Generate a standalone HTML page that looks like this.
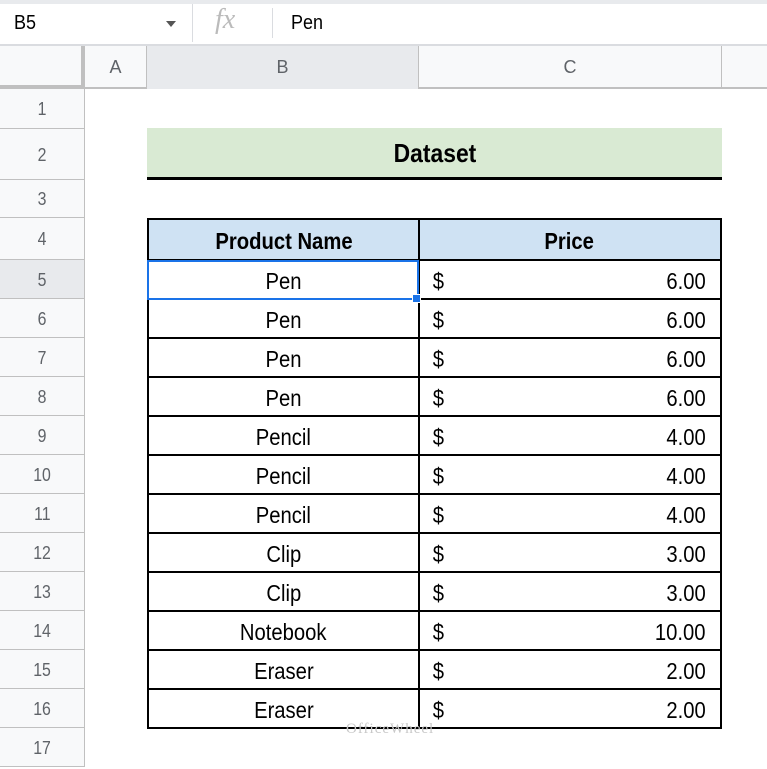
<!DOCTYPE html>
<html><head><style>
body{margin:0;width:767px;height:769px;overflow:hidden;background:#fff;font-family:"Liberation Sans",Arial,sans-serif;position:relative}
.a{position:absolute;box-sizing:border-box}
.rh{position:absolute;left:0;width:85px;background:#f8f9fa;border-bottom:1px solid #c0c0c0;border-right:1px solid #c0c0c0;color:#5f6368;font-size:18px;text-align:center;box-sizing:border-box;display:flex;align-items:center;justify-content:center;padding-top:2px}
.rh span,.cell span{display:inline-block;transform:scaleX(0.88)}
.cell{position:absolute;box-sizing:border-box;font-size:23px;color:#000;display:flex;align-items:center;padding-top:3px}
</style></head><body>
<div class="a" style="left:0;top:0;width:767px;height:4px;background:#e8eaed"></div>
<div class="a" style="left:0;top:44px;width:767px;height:2px;background:#dadce0"></div>
<div class="a" style="left:14px;top:12px;font-size:20px;color:#000;transform:scaleX(0.9);transform-origin:left">B5</div>
<div class="a" style="left:166px;top:21px;width:0;height:0;border-left:5px solid transparent;border-right:5px solid transparent;border-top:6px solid #555"></div>
<div class="a" style="left:192px;top:4px;width:1px;height:38px;background:#dadce0"></div>
<div class="a" style="left:215px;top:4px;font-family:'Liberation Serif',serif;font-style:italic;font-size:28px;color:#bbb">fx</div>
<div class="a" style="left:272px;top:8px;width:1px;height:30px;background:#dadce0"></div>
<div class="a" style="left:291px;top:12px;font-size:20px;color:#000;transform:scaleX(0.9);transform-origin:left">Pen</div>
<div class="a" style="left:0;top:46px;width:767px;height:43px;background:#f8f9fa;border-bottom:2px solid #c0c0c0"></div>
<div class="a" style="left:0;top:46px;width:85px;height:43px;border-right:4px solid #c0c0c0;border-bottom:4px solid #c0c0c0"></div>
<div class="a" style="left:85px;top:46px;width:62px;height:43px;border-right:1px solid #c0c0c0;color:#5f6368;font-size:18px;text-align:center;line-height:43px">A</div>
<div class="a" style="left:147px;top:46px;width:272px;height:43px;background:#e8eaed;border-right:1px solid #c0c0c0;color:#5f6368;font-size:18px;text-align:center;line-height:43px">B</div>
<div class="a" style="left:419px;top:46px;width:303px;height:43px;border-right:1px solid #c0c0c0;color:#5f6368;font-size:18px;text-align:center;line-height:43px">C</div>
<div class="rh" style="top:89px;height:40px"><span>1</span></div>
<div class="rh" style="top:129px;height:51px"><span>2</span></div>
<div class="rh" style="top:180px;height:38px"><span>3</span></div>
<div class="rh" style="top:218px;height:42px"><span>4</span></div>
<div class="rh" style="top:260px;height:39px;background:#e8eaed"><span>5</span></div>
<div class="rh" style="top:299px;height:39px"><span>6</span></div>
<div class="rh" style="top:338px;height:39px"><span>7</span></div>
<div class="rh" style="top:377px;height:39px"><span>8</span></div>
<div class="rh" style="top:416px;height:39px"><span>9</span></div>
<div class="rh" style="top:455px;height:39px"><span>10</span></div>
<div class="rh" style="top:494px;height:39px"><span>11</span></div>
<div class="rh" style="top:533px;height:39px"><span>12</span></div>
<div class="rh" style="top:572px;height:39px"><span>13</span></div>
<div class="rh" style="top:611px;height:39px"><span>14</span></div>
<div class="rh" style="top:650px;height:39px"><span>15</span></div>
<div class="rh" style="top:689px;height:39px"><span>16</span></div>
<div class="rh" style="top:728px;height:39px"><span>17</span></div>
<div class="cell" style="left:147px;top:128px;width:575px;height:52px;background:#d9ead3;border-bottom:3px solid #000;justify-content:center;font-weight:bold;font-size:26px;padding-top:2px"><span>Dataset</span></div>
<div class="a" style="left:147px;top:218px;width:575px;height:511px;border:2px solid #000"></div>
<div class="cell" style="left:149px;top:220px;width:270px;height:40px;background:#cfe2f3;justify-content:center;font-weight:bold"><span>Product Name</span></div>
<div class="cell" style="left:419px;top:220px;width:301px;height:40px;background:#cfe2f3;justify-content:center;font-weight:bold"><span>Price</span></div>
<div class="a" style="left:418px;top:218px;width:2px;height:511px;background:#000"></div>
<div id="rows"></div>
<script>
var d=[["Pen","6.00"],["Pen","6.00"],["Pen","6.00"],["Pen","6.00"],["Pencil","4.00"],["Pencil","4.00"],["Pencil","4.00"],["Clip","3.00"],["Clip","3.00"],["Notebook","10.00"],["Eraser","2.00"],["Eraser","2.00"]];
var h="";
for(var i=0;i<d.length;i++){var t=260+i*39;
h+='<div class="a" style="left:147px;top:'+(t-1)+'px;width:575px;height:2px;background:#000"></div>';
h+='<div class="cell" style="left:149px;top:'+t+'px;width:269px;height:39px;justify-content:center"><span>'+d[i][0]+'</span></div>';
h+='<div class="cell" style="left:432px;top:'+t+'px;height:39px"><span>$</span></div>';
h+='<div class="cell" style="left:420px;top:'+t+'px;width:286px;height:39px;justify-content:flex-end"><span style="transform-origin:right">'+d[i][1]+'</span></div>';}
document.getElementById("rows").innerHTML=h;
</script>
<div class="a" style="left:147px;top:260px;width:272px;height:40px;border:2px solid #1a73e8"></div>
<div class="a" style="left:412px;top:294px;width:9px;height:9px;background:#1a73e8;border:1px solid #fff"></div>
<div class="a" style="left:346px;top:721px;font-family:'Liberation Serif',serif;font-size:15px;color:#c8c8c8;letter-spacing:1px">OfficeWheel</div>
</body></html>
